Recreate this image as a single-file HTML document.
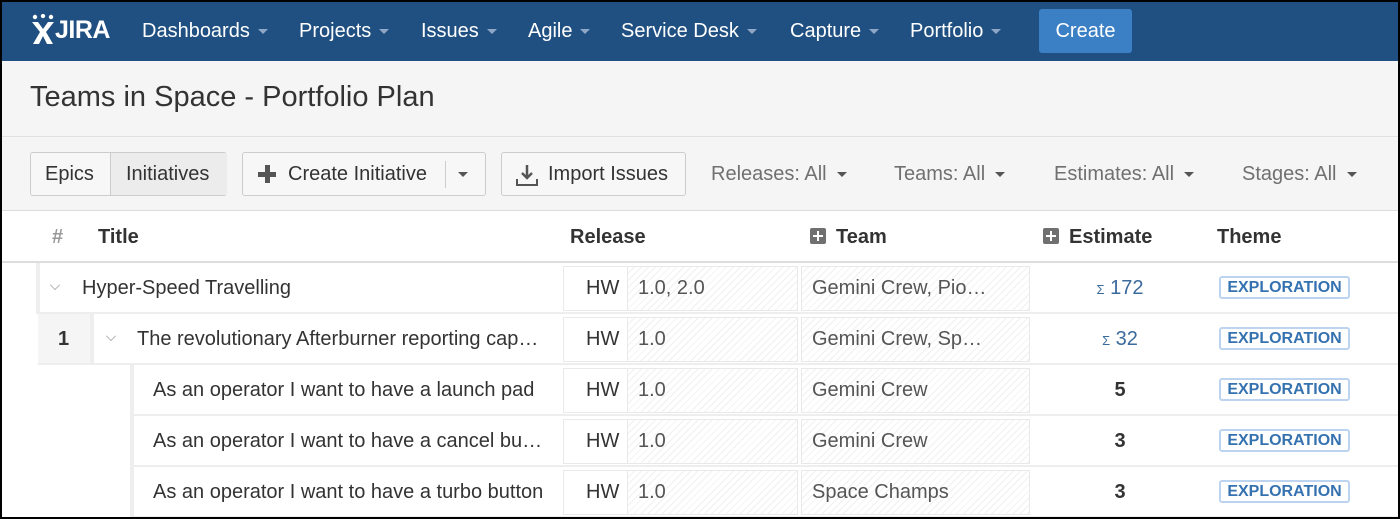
<!DOCTYPE html>
<html><head><meta charset="utf-8"><style>
*{margin:0;padding:0;box-sizing:border-box}
body{width:1400px;height:519px;overflow:hidden;background:#000;font-family:"Liberation Sans",sans-serif;position:relative}
#w{position:absolute;left:2px;top:2px;width:1396px;height:515px;background:#fff;overflow:hidden}
.a{position:absolute;white-space:nowrap}
#nav{position:absolute;left:0;top:0;width:1396px;height:59px;background:#205081}
.nv{position:absolute;top:18px;color:#fff;font-size:20px}
.car{display:inline-block;width:0;height:0;border-left:5px solid transparent;border-right:5px solid transparent;border-top:5px solid #8fa7c6;vertical-align:middle;margin-left:8px}
.dcar{display:inline-block;width:0;height:0;border-left:5px solid transparent;border-right:5px solid transparent;border-top:5px solid #555;vertical-align:middle;margin-left:10px}
#hdr{position:absolute;left:0;top:59px;width:1396px;height:149px;background:#f5f5f5}
.btn{position:absolute;top:150px;height:44px;border:1px solid #ccc;border-radius:3px;background:#f7f7f7;font-size:20px;color:#333;line-height:42px}
.th{position:absolute;top:224px;font-size:20px;font-weight:bold;color:#333}
.row{position:absolute;height:51px;border-bottom:2px solid #eee}
.tt{position:absolute;font-size:20px;color:#333}
.cell{position:absolute;height:45px;border:1px solid #e9e9e9;font-size:20px;color:#555;line-height:43px;padding-left:10px}
.hat{background:repeating-linear-gradient(135deg,#fff 0 4px,#f0f0f0 4px 5px)}
.badge{position:absolute;left:1217px;width:131px;height:23px;border:2px solid #bcd4ef;border-radius:3px;color:#3572b0;font-weight:bold;font-size:16px;text-align:center;line-height:19px}
.est{position:absolute;width:80px;left:1078px;text-align:center;font-size:20px}
.pl{display:inline-block;width:16px;height:16px;background:#707070;border-radius:2px;position:relative;vertical-align:-1px;margin-right:10px}
.pl:before{content:"";position:absolute;left:3px;top:7px;width:10px;height:2px;background:#fff}
.pl:after{content:"";position:absolute;left:7px;top:3px;width:2px;height:10px;background:#fff}
.chev{position:absolute;width:10px;height:10px;border-right:1.5px solid #999;border-bottom:1.5px solid #999;transform:rotate(45deg) scale(.7)}
</style></head><body><div id="w">
<div id="nav">
<svg class="a" style="left:28px;top:12px" width="26" height="32" viewBox="0 0 26 32"><g fill="#fff"><circle cx="5" cy="3" r="2.2"/><circle cx="13" cy="2" r="2.2"/><circle cx="21" cy="3" r="2.2"/><path d="M2 8h6l5 7 5-7h6l-8 10 7 12h-6l-4-8-4 8h-6l7-12z"/></g></svg>
<div class="nv" style="left:53px;top:14px;font-weight:bold;font-size:25px;letter-spacing:-0.5px">JIRA</div>
<div class="nv" style="left:140px">Dashboards<span class="car"></span></div>
<div class="nv" style="left:297px">Projects<span class="car"></span></div>
<div class="nv" style="left:419px">Issues<span class="car"></span></div>
<div class="nv" style="left:526px">Agile<span class="car"></span></div>
<div class="nv" style="left:619px">Service Desk<span class="car"></span></div>
<div class="nv" style="left:788px">Capture<span class="car"></span></div>
<div class="nv" style="left:908px">Portfolio<span class="car"></span></div>
<div class="a" style="left:1037px;top:7px;width:93px;height:44px;background:#3b7fc4;border-radius:3px;color:#fff;font-size:20px;text-align:center;line-height:44px">Create</div>
</div>
<div id="hdr"></div>
<div class="a" style="left:28px;top:79px;font-size:29px;color:#333">Teams in Space - Portfolio Plan</div>
<div class="a" style="left:0;top:134px;width:1396px;height:1px;background:#e0e0e0"></div>
<div class="btn" style="left:28px;width:197px"><span class="a" style="left:14px">Epics</span><span class="a" style="left:79px;top:0;width:117px;height:42px;background:#ececec;border-left:1px solid #ccc"></span><span class="a" style="left:95px">Initiatives</span></div>
<div class="btn" style="left:240px;width:244px"><span class="a" style="left:15px;top:12px;width:20px;height:18px"><span class="a" style="left:0;top:7px;width:18px;height:5px;background:#555"></span><span class="a" style="left:6.5px;top:0;width:5px;height:18px;background:#555"></span></span><span class="a" style="left:45px">Create Initiative</span><span class="a" style="left:202px;top:8px;width:1px;height:27px;background:#ccc"></span><span class="a" style="left:215px;top:19px;border-left:5px solid transparent;border-right:5px solid transparent;border-top:5px solid #555"></span></div>
<div class="btn" style="left:499px;width:185px"><svg class="a" style="left:13px;top:10px" width="24" height="24" viewBox="0 0 24 24"><path d="M12 2v13M7 10l5 5 5-5" stroke="#555" stroke-width="2.5" fill="none"/><path d="M2 16v6h20v-6" stroke="#555" stroke-width="2" fill="none"/></svg><span class="a" style="left:46px">Import Issues</span></div>
<div class="a" style="left:709px;top:161px;font-size:20px;color:#707070">Releases: All<span class="dcar"></span></div>
<div class="a" style="left:892px;top:161px;font-size:20px;color:#707070">Teams: All<span class="dcar"></span></div>
<div class="a" style="left:1052px;top:161px;font-size:20px;color:#707070">Estimates: All<span class="dcar"></span></div>
<div class="a" style="left:1240px;top:161px;font-size:20px;color:#707070">Stages: All<span class="dcar"></span></div>
<div class="a" style="left:0;top:208px;width:1396px;height:1px;background:#ddd"></div>
<div class="th" style="left:50px;color:#999">#</div>
<div class="th" style="left:96px">Title</div>
<div class="th" style="left:568px">Release</div>
<div class="th" style="left:808px"><span class="pl"></span>Team</div>
<div class="th" style="left:1041px"><span class="pl"></span>Estimate</div>
<div class="th" style="left:1215px">Theme</div>
<div class="a" style="left:0;top:259px;width:1396px;height:2px;background:#ddd"></div>
<div class="row" style="left:34px;top:261px;width:1362px;border-left:4px solid #eee"></div>
<div class="row" style="left:36px;top:312px;width:1360px"></div>
<div class="a" style="left:36px;top:312px;width:52px;height:49px;background:#f5f5f5"></div>
<div class="a" style="left:88px;top:312px;width:4px;height:51px;background:#eee"></div>
<div class="row" style="left:128px;top:363px;width:1268px;border-left:4px solid #eee"></div>
<div class="row" style="left:128px;top:414px;width:1268px;border-left:4px solid #eee"></div>
<div class="row" style="left:128px;top:465px;width:1268px;border-left:4px solid #eee"></div>
<div class="chev" style="left:48px;top:278px"></div>
<div class="tt" style="left:80px;top:275px">Hyper-Speed Travelling</div>
<div class="tt" style="left:56px;top:326px;font-weight:bold">1</div>
<div class="chev" style="left:104px;top:329px"></div>
<div class="tt" style="left:135px;top:326px">The revolutionary Afterburner reporting cap…</div>
<div class="tt" style="left:151px;top:377px">As an operator I want to have a launch pad</div>
<div class="tt" style="left:151px;top:428px">As an operator I want to have a cancel bu…</div>
<div class="tt" style="left:151px;top:479px">As an operator I want to have a turbo button</div>
<div class="cell" style="left:561px;top:264px;width:65px;color:#333;padding-left:22px">HW</div><div class="cell hat" style="left:625px;top:264px;width:171px">1.0, 2.0</div><div class="cell hat" style="left:799px;top:264px;width:229px">Gemini Crew, Pio…</div>
<div class="cell" style="left:561px;top:315px;width:65px;color:#333;padding-left:22px">HW</div><div class="cell hat" style="left:625px;top:315px;width:171px">1.0</div><div class="cell hat" style="left:799px;top:315px;width:229px">Gemini Crew, Sp…</div>
<div class="cell" style="left:561px;top:366px;width:65px;color:#333;padding-left:22px">HW</div><div class="cell hat" style="left:625px;top:366px;width:171px">1.0</div><div class="cell hat" style="left:799px;top:366px;width:229px">Gemini Crew</div>
<div class="cell" style="left:561px;top:417px;width:65px;color:#333;padding-left:22px">HW</div><div class="cell hat" style="left:625px;top:417px;width:171px">1.0</div><div class="cell hat" style="left:799px;top:417px;width:229px">Gemini Crew</div>
<div class="cell" style="left:561px;top:468px;width:65px;color:#333;padding-left:22px">HW</div><div class="cell hat" style="left:625px;top:468px;width:171px">1.0</div><div class="cell hat" style="left:799px;top:468px;width:229px">Space Champs</div>
<div class="est" style="top:275px;color:#3b6a9c"><span style="font-size:13px">Σ</span> 172</div>
<div class="est" style="top:326px;color:#3b6a9c"><span style="font-size:13px">Σ</span> 32</div>
<div class="est" style="top:377px;font-weight:bold;color:#333">5</div>
<div class="est" style="top:428px;font-weight:bold;color:#333">3</div>
<div class="est" style="top:479px;font-weight:bold;color:#333">3</div>
<div class="badge" style="top:274px">EXPLORATION</div>
<div class="badge" style="top:325px">EXPLORATION</div>
<div class="badge" style="top:376px">EXPLORATION</div>
<div class="badge" style="top:427px">EXPLORATION</div>
<div class="badge" style="top:478px">EXPLORATION</div>
</div></body></html>
